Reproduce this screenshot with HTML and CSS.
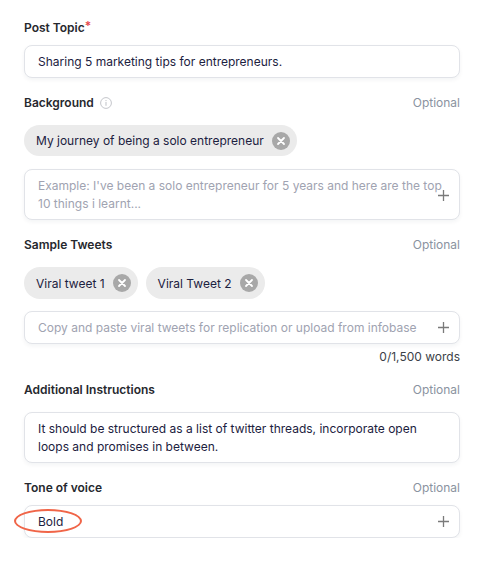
FILE: index.html
```html
<!DOCTYPE html>
<html>
<head>
<meta charset="utf-8">
<link rel="stylesheet" href="styles.css">
</head>
<body>
<form class="form">
  <section class="field">
    <div class="label-row"><span class="label">Post Topic<span class="req">*</span></span></div>
    <div class="input input-tight">Sharing 5 marketing tips for entrepreneurs.</div>
  </section>

  <section class="field">
    <div class="label-row">
      <span class="label">Background
        <svg class="info" width="12" height="12" viewBox="0 0 12 12"><circle cx="6" cy="6" r="5.4" fill="none" stroke="#c4c6cb" stroke-width="1"/><circle cx="6" cy="3.6" r="0.7" fill="#c4c6cb"/><rect x="5.45" y="5" width="1.1" height="3.8" rx="0.4" fill="#c4c6cb"/></svg>
      </span>
      <span class="optional">Optional</span>
    </div>
    <div class="chips">
      <span class="chip">My journey of being a solo entrepreneur<span class="chip-x"><svg width="18" height="18" viewBox="0 0 18 18"><circle cx="9" cy="9" r="9" fill="#a8a8a8"/><path d="M6 6l6 6M12 6l-6 6" stroke="#fff" stroke-width="1.8" stroke-linecap="round"/></svg></span></span>
    </div>
    <div class="input textarea placeholder">
      <span class="ta-text">Example: I've been a solo entrepreneur for 5 years and here are the top 10 things i learnt...</span>
      <svg class="plus plus-low" width="11" height="11" viewBox="0 0 11 11"><path d="M5.5 0v11M0 5.5h11" stroke="#7a7a7a" stroke-width="1.3"/></svg>
    </div>
  </section>

  <section class="field">
    <div class="label-row"><span class="label">Sample Tweets</span><span class="optional">Optional</span></div>
    <div class="chips">
      <span class="chip">Viral tweet 1<span class="chip-x"><svg width="18" height="18" viewBox="0 0 18 18"><circle cx="9" cy="9" r="9" fill="#a8a8a8"/><path d="M6 6l6 6M12 6l-6 6" stroke="#fff" stroke-width="1.8" stroke-linecap="round"/></svg></span></span>
      <span class="chip">Viral Tweet 2<span class="chip-x"><svg width="18" height="18" viewBox="0 0 18 18"><circle cx="9" cy="9" r="9" fill="#a8a8a8"/><path d="M6 6l6 6M12 6l-6 6" stroke="#fff" stroke-width="1.8" stroke-linecap="round"/></svg></span></span>
    </div>
    <div class="input input-row placeholder">
      <span>Copy and paste viral tweets for replication or upload from infobase</span>
      <svg class="plus" width="11" height="11" viewBox="0 0 11 11"><path d="M5.5 0v11M0 5.5h11" stroke="#7a7a7a" stroke-width="1.3"/></svg>
    </div>
    <div class="count">0/1,500 words</div>
  </section>

  <section class="field">
    <div class="label-row"><span class="label">Additional Instructions</span><span class="optional">Optional</span></div>
    <div class="input textarea textarea-gap">It should be structured as a list of twitter threads, incorporate open loops and promises in between.</div>
  </section>

  <section class="field">
    <div class="label-row"><span class="label">Tone of voice</span><span class="optional">Optional</span></div>
    <div class="input input-row input-tight tone">
      <span>Bold</span>
      <svg class="plus" width="11" height="11" viewBox="0 0 11 11"><path d="M5.5 0v11M0 5.5h11" stroke="#7a7a7a" stroke-width="1.3"/></svg>
      <span class="mark"></span>
    </div>
  </section>
</form>
</body>
</html>
```

FILE: styles.css
```css
* { box-sizing: border-box; }
html, body { margin: 0; padding: 0; background: #fff; }
body {
  font-family: Inter, "Noto Sans", "Liberation Sans", sans-serif;
  color: #1c2140;
  font-size: 12px;
}
.form {
  width: 436px;
  margin-left: 24px;
  padding-top: 20px;
  display: flex;
  flex-direction: column;
  gap: 17px;
}
.field { display: flex; flex-direction: column; }
.label-row {
  display: flex;
  justify-content: space-between;
  align-items: center;
  height: 16px;
  line-height: 16px;
}
.label {
  font-weight: 600;
  font-size: 12px;
  color: #26282e;
  display: inline-flex;
  align-items: center;
  gap: 6px;
}
.req { color: #e5484d; font-size: 12px; position: relative; top: -2px; font-weight: 600; }
.label .req { margin-left: -6px; }
.info { display: block; }
.optional { color: #8a93a0; font-size: 12px; }
.input {
  border: 1px solid #e1e3e8;
  border-radius: 8px;
  background: #fff;
  box-shadow: 0 2px 4px rgba(20, 30, 50, 0.05);
  padding: 0 13px;
  height: 33px;
  line-height: 31px;
  margin-top: 14px;
  position: relative;
}
.input-tight { margin-top: 9px; }
.textarea {
  height: 51px;
  line-height: 18px;
  padding: 7px 13px;
  margin-top: 13px;
  position: relative;
}
.textarea-gap { margin-top: 14px; }
.placeholder { color: #a0a3b1; }
.ta-text { display: block; }
.plus-low { position: absolute; right: 10px; top: 20px; }
.input-row {
  display: flex;
  align-items: center;
  justify-content: space-between;
  margin-top: 12px;
  padding-right: 10px;
}
.tone { margin-top: 9px; }
.plus { display: block; flex: none; }
.chips { display: flex; gap: 8px; margin-top: 14px; }
.chip {
  display: inline-flex;
  align-items: center;
  gap: 8px;
  background: #ebebeb;
  border-radius: 16px;
  height: 31px;
  padding: 0 7px 0 12px;
  color: #1c2140;
  font-size: 12px;
}
.field:nth-child(3) .chip { height: 32px; }
.chip-x svg { display: block; }
.count {
  text-align: right;
  margin-top: 5px;
  font-size: 12px;
  color: #3c3f48;
  line-height: 16px;
}
.mark {
  position: absolute;
  left: -11px;
  top: 3px;
  width: 68px;
  height: 24px;
  border: 2px solid #f06548;
  border-radius: 50%;
}
```
